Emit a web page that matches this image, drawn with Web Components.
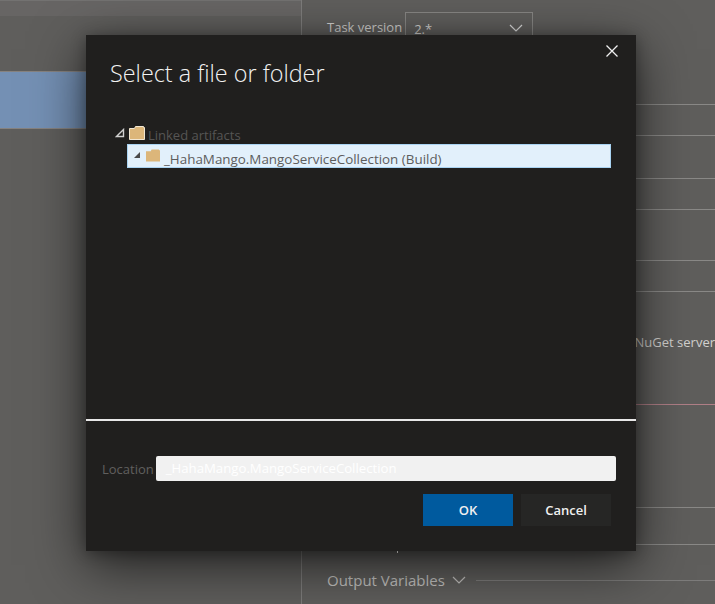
<!DOCTYPE html>
<html>
<head>
<meta charset="utf-8">
<style>
  html, body { margin: 0; height: 100%; overflow: hidden; background: #5f5e5c; }
  body { font-family: "Open Sans", "Noto Sans", sans-serif; }
</style>
</head>
<body>
<release-page>
  <left-panel slot="left"></left-panel>
  <task-panel slot="right"></task-panel>
  <picker-dialog slot="over" title-text="Select a file or folder" location="_HahaMango.MangoServiceCollection">
    <tree-row slot="tree" label="Linked artifacts"></tree-row>
    <tree-row slot="tree" child selected label="_HahaMango.MangoServiceCollection (Build)"></tree-row>
    <dialog-button slot="buttons" primary>OK</dialog-button>
    <dialog-button slot="buttons">Cancel</dialog-button>
  </picker-dialog>
</release-page>

<script>
////////////////////
// helper
////////////////////
const makeEl = (name, html) => {
  class C extends HTMLElement {
    constructor() {
      super();
      this.attachShadow({ mode: "open" });
      this.shadowRoot.innerHTML = typeof html === "function" ? html(this) : html;
    }
  }
  customElements.define(name, C);
};

const chevron = (w, h, c) =>
  `<svg width="${w}" height="${h}" viewBox="0 0 14 8"><path d="M1 1l6 6 6-6" fill="none" stroke="${c}" stroke-width="1.2"/></svg>`;

////////////////////
// page shell
////////////////////
makeEl("release-page", `
<style>
  :host { display: flex; width: 715px; height: 604px; position: relative; overflow: hidden; background: #5f5e5c; }
  .l { display: block; width: 301px; flex: none; border-right: 1px solid #7d7c7b; }
  .r { display: block; flex: 1; min-width: 0; }
</style>
<div class="l"><slot name="left"></slot></div>
<div class="r"><slot name="right"></slot></div>
<slot name="over"></slot>
`);

makeEl("left-panel", `
<style>
  :host { display: flex; flex-direction: column; height: 100%; }
  .head { height: 16px; background: #676564; border-top: 1px solid #737271; box-sizing: border-box; }
  .gap { height: 55px; }
  .sel { height: 58px; box-sizing: border-box; background: #7490b4; border-top: 1px solid #86827f; border-bottom: 1px solid #86827f; }
</style>
<div class="head"></div>
<div class="gap"></div>
<div class="sel"></div>
`);

////////////////////
// right side, behind the dialog
////////////////////
makeEl("task-panel", `
<style>
  :host { display: flex; flex-direction: column; height: 100%; font-size: 13px; color: #d2d1cf; }
  .ver { display: flex; align-items: center; gap: 3px; padding: 12px 0 0 25px; height: 42px; box-sizing: border-box; }
  .ver > span { white-space: nowrap; margin-top: 0; }
  .box { width: 128px; height: 30px; box-sizing: border-box; border: 1px solid #868583; display: flex; align-items: center; justify-content: space-between; padding: 3px 8px 0 8px; }
  .box svg { margin-right: 1px; margin-top: -2px; }
  .line { border-bottom: 1px solid #8a8987; flex: none; box-sizing: border-box; }
  .red { border-bottom-color: #b07f87; }
  .nuget { display: flex; align-items: center; justify-content: flex-end; white-space: nowrap; }
  .out { display: flex; align-items: center; gap: 7px; padding: 25px 0 0 25px; font-size: 15px; color: #c4c3c1; white-space: nowrap; }
  .out i { flex: 1; border-top: 1px solid #7d7c7b; margin-left: 3px; }
</style>
<div class="ver"><span>Task version</span><div class="box"><span>2.*</span>${chevron(14, 8, "#dcdcdc")}</div></div>
<div class="line" style="height:63px"></div>
<div class="line" style="height:31px"></div>
<div class="line" style="height:43px"></div>
<div class="line" style="height:31px"></div>
<div class="line" style="height:51px"></div>
<div class="line" style="height:31px"></div>
<div class="line red nuget" style="height:113px;align-items:flex-start;padding-top:41px">NuGet server</div>
<div class="line" style="height:103px"></div>
<div class="line" style="height:37px"></div>
<div class="out">Output Variables ${chevron(14, 8, "#c4c3c1")}<i></i></div>
`);

////////////////////
// dialog
////////////////////
makeEl("picker-dialog", (el) => `
<style>
  :host { position: absolute; left: 86px; top: 35px; width: 550px; height: 516px; display: flex; flex-direction: column;
    background: #201f1e; box-shadow: 0 14px 50px rgba(0,0,0,.66), 0 2px 14px rgba(0,0,0,.32); color: #fff; }
  :host::after { content: ""; position: absolute; left: 311px; top: 516px; width: 1px; height: 2px; background: #8a8987; }
  .close { position: absolute; top: 9px; right: 17px; width: 14px; height: 14px; }
  h1 { margin: 0; padding: 21px 0 0 24px; height: 68px; box-sizing: border-box; font-size: 23.4px; font-weight: 300; line-height: 34px; color: #f2f2f2; }
  .tree { flex: 1; padding: 21px 25px 0 29px; display: flex; flex-direction: column; }
  .rule { height: 2px; background: #e8e8e8; }
  .loc { display: flex; align-items: center; padding: 35px 20px 0 16px; font-size: 13px; color: #605f5e; white-space: nowrap; }
  .inp { margin-left: 2px; flex: 1; height: 25px; box-sizing: border-box; background: #f1f1f1; border-radius: 2px; color: #fff; padding-left: 10px; line-height: 25px; font-size: 13.2px; }
  .btns { display: flex; justify-content: flex-end; gap: 8px; padding: 13px 25px 25px 0; }
</style>
<svg class="close" viewBox="0 0 14 14"><path d="M1.5 1.5l11 11M12.5 1.5l-11 11" stroke="#f0f0f0" stroke-width="1.3" fill="none"/></svg>
<h1>${el.getAttribute("title-text")}</h1>
<div class="tree"><slot name="tree"></slot></div>
<div class="rule"></div>
<div class="loc"><span>Location</span><div class="inp">${el.getAttribute("location")}</div></div>
<div class="btns"><slot name="buttons"></slot></div>
`);

makeEl("tree-row", (el) => {
  const child = el.hasAttribute("child");
  const selected = el.hasAttribute("selected");
  return `
<style>
  :host { display: block; margin-left: ${child ? 12 : 0}px; }
  .row { display: flex; align-items: center; font-size: ${child ? 13.4 : 13}px; white-space: nowrap; box-sizing: border-box; height: ${child ? 24 : 20}px;
    color: #565554; padding-top: ${child ? 0 : 2}px; }
  .sel { background: #e2f0fb; border: 1px solid #a9d3f2; color: #5d5d5d; padding-left: 5px; }
  .tri { flex: none; margin-right: ${child ? 5 : 4}px; margin-top: ${child ? -2 : -5}px; }
  .fold { flex: none; margin-right: 3px; margin-top: ${child ? -2 : -5}px; }
  .txt { margin-top: ${child ? 6 : 0}px; margin-left: ${child ? 1 : 0}px; }
</style>
<div class="row ${selected ? "sel" : ""}">
  ${child
    ? `<svg class="tri" width="8" height="8" viewBox="0 0 8 8"><path d="M7 1v6H1z" fill="#4a4a4a"/></svg>`
    : `<svg class="tri" width="10" height="10" viewBox="0 0 10 10"><path d="M8.5 1.5v7h-7z" fill="none" stroke="#d0d0d0" stroke-width="1.4"/></svg>`}
  ${child
    ? `<svg class="fold" width="14" height="13" viewBox="0 0 15 13"><path d="M0 2h5l1-2h8v1h1v12H0z" fill="#dcb67a"/></svg>`
    : `<svg class="fold" width="16" height="14" viewBox="0 0 16 14"><path d="M.5 2.5h5l1-2h8v1h1v12H.5z" fill="#dcb67a" stroke="#f1e6d2"/></svg>`}
  <span class="txt">${el.getAttribute("label")}</span>
</div>`;
});

makeEl("dialog-button", (el) => `
<style>
  :host { display: block; }
  .b { width: 90px; height: 32px; display: flex; align-items: center; justify-content: center;
    font-size: 13px; font-weight: 600; color: #f0f0f0; background: ${el.hasAttribute("primary") ? "#005a9e" : "#262625"}; }
</style>
<div class="b"><slot></slot></div>
`);
</script>
</body>
</html>
